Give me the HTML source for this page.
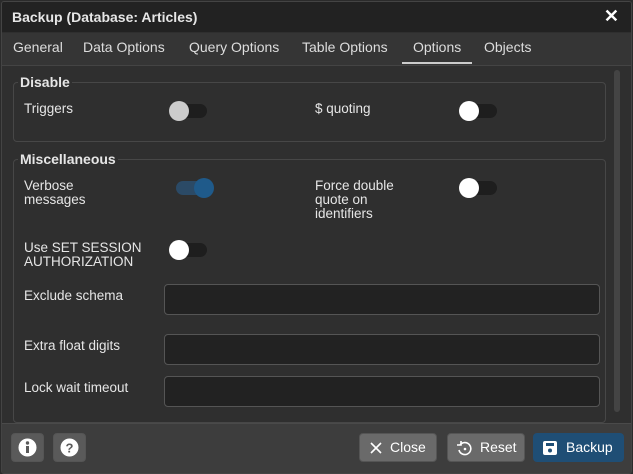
<html><head><style>
body{margin:0;width:633px;height:474px;background:#2b2b2b;font-family:"Liberation Sans",sans-serif;font-size:13.5px;color:#e6e6e6;position:relative;overflow:hidden}
.dlg{position:absolute;left:1px;top:1px;width:629px;height:471px;border:1px solid #444;background:#2f2f2f;border-radius:3px;overflow:hidden}
.title{position:absolute;left:0;top:0;width:629px;height:30px;background:#222;font-weight:bold;font-size:14px}
.title span{position:absolute;left:10px;top:7px}
.x{position:absolute;right:12px;top:4px;font-size:18px;color:#fff}
.tabs{position:absolute;left:0;top:31px;width:629px;height:32px;background:#353535;border-bottom:1px solid #444}
.tab{position:absolute;top:6px;font-size:14px;color:#ddd}
.ul{position:absolute;left:400px;top:29px;width:70px;height:2px;background:#ccc}
.fs{position:absolute;border:1px solid #474747;border-radius:4px}
.leg{position:absolute;font-weight:bold;font-size:14px;background:#2f2f2f;padding:0 2px}
.lbl{position:absolute;line-height:14px}
.sw{position:absolute;width:36px;height:14px;border-radius:7px;background:#1e1e1e}
.sw i{position:absolute;left:-2px;top:-3px;width:20px;height:20px;border-radius:50%;background:#fff}
.inp{position:absolute;left:162px;width:434px;height:29px;background:#222;border:1px solid #555;border-radius:4px}
.foot{position:absolute;left:0;top:421px;width:629px;height:50px;background:#3d3d3d;border-top:1px solid #4a4a4a}
.btn{position:absolute;top:9px;height:29px;border:1px solid #555;border-radius:4px;background:#6a6a6a;color:#fff;font-size:14px;line-height:27px;box-sizing:border-box}
</style></head><body>
<div class="dlg">
<div class="title"><span>Backup (Database: Articles)</span><div class="x">✕</div></div>
<div class="tabs">
<div class="tab" style="left:11px">General</div>
<div class="tab" style="left:81px">Data Options</div>
<div class="tab" style="left:187px">Query Options</div>
<div class="tab" style="left:300px">Table Options</div>
<div class="tab" style="left:411px">Options</div>
<div class="tab" style="left:482px">Objects</div>
<div class="ul"></div>
</div>
<div style="position:absolute;left:612px;top:68px;width:6px;height:342px;background:#444;border-radius:3px"></div>
<div class="fs" style="left:11px;top:80px;width:591px;height:58px"></div>
<div class="leg" style="left:16px;top:72px">Disable</div>
<div class="lbl" style="left:22px;top:100px">Triggers</div>
<div class="sw" style="left:169px;top:102px"><i style="background:#ccc"></i></div>
<div class="lbl" style="left:313px;top:100px">$ quoting</div>
<div class="sw" style="left:459px;top:102px"><i></i></div>
<div class="fs" style="left:11px;top:157px;width:591px;height:262px"></div>
<div class="leg" style="left:16px;top:149px">Miscellaneous</div>
<div class="lbl" style="left:22px;top:177px">Verbose<br>messages</div>
<div class="sw" style="left:174px;top:179px;background:#2b4a66"><i style="left:18px;background:#1f5a8a"></i></div>
<div class="lbl" style="left:313px;top:177px">Force double<br>quote on<br>identifiers</div>
<div class="sw" style="left:459px;top:179px"><i></i></div>
<div class="lbl" style="left:22px;top:239px">Use SET SESSION<br>AUTHORIZATION</div>
<div class="sw" style="left:169px;top:241px"><i></i></div>
<div class="lbl" style="left:22px;top:287px">Exclude schema</div>
<div class="inp" style="top:282px"></div>
<div class="lbl" style="left:22px;top:337px">Extra float digits</div>
<div class="inp" style="top:332px"></div>
<div class="lbl" style="left:22px;top:379px">Lock wait timeout</div>
<div class="inp" style="top:374px"></div>
<div class="foot">
<div class="btn" style="left:9px;width:33px;background:#5a5a5a"><svg width="31" height="27"><circle cx="15.5" cy="13.5" r="9" fill="#fff"/><rect x="14" y="12" width="3" height="7" fill="#5a5a5a"/><circle cx="15.5" cy="9" r="1.7" fill="#5a5a5a"/></svg></div>
<div class="btn" style="left:51px;width:33px;background:#5a5a5a"><svg width="31" height="27"><circle cx="15.5" cy="13.5" r="9" fill="#fff"/><text x="15.5" y="18.5" text-anchor="middle" font-size="13" font-weight="bold" fill="#5a5a5a" font-family="Liberation Sans">?</text></svg></div>
<div class="btn" style="left:357px;width:78px;padding-left:30px">Close<svg style="position:absolute;left:10px;top:8px" width="12" height="12"><path d="M1 1L11 11M11 1L1 11" stroke="#fff" stroke-width="1.6"/></svg></div>
<div class="btn" style="left:445px;width:78px;padding-left:32px">Reset<svg style="position:absolute;left:8px;top:6px" width="16" height="16"><path d="M4 5A6 6 0 1 1 3 10" fill="none" stroke="#fff" stroke-width="1.6"/><path d="M1 5h4V1" fill="none" stroke="#fff" stroke-width="1.6"/><circle cx="9" cy="9" r="1.3" fill="#fff"/></svg></div>
<div class="btn" style="left:531px;width:91px;background:#1f4e75;border-color:#1f4e75;padding-left:32px">Backup<svg style="position:absolute;left:9px;top:7px" width="14" height="14"><rect x="0" y="0" width="14" height="14" rx="2" fill="#fff"/><rect x="3" y="2" width="8" height="3" fill="#1f4e75"/><circle cx="7" cy="9.5" r="2" fill="#1f4e75"/></svg></div>
</div>
</div>
</body></html>
